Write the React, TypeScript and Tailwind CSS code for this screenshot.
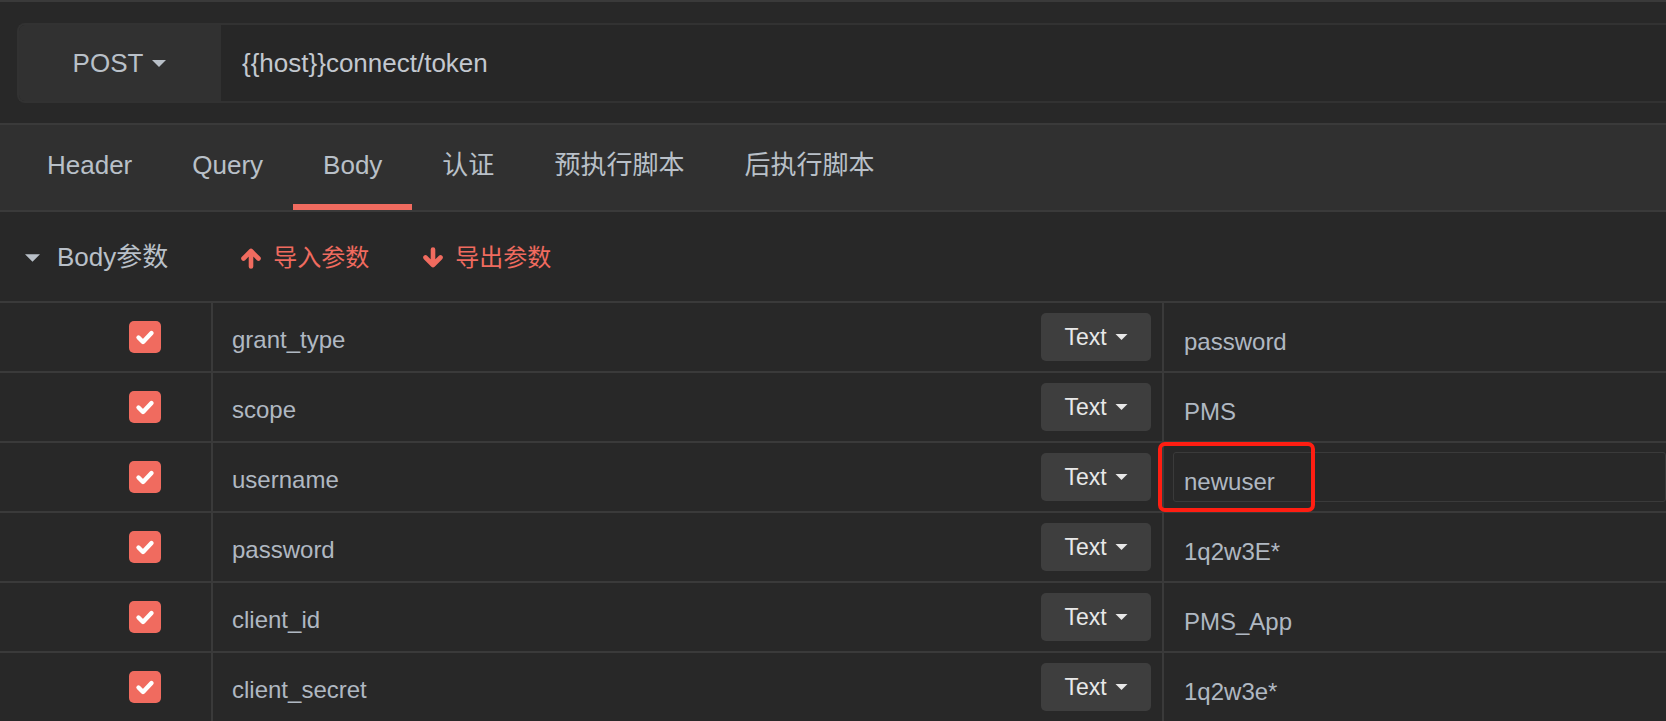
import React from "react";

const rows = [
  { key: "grant_type", value: "password" },
  { key: "scope", value: "PMS" },
  { key: "username", value: "newuser", focused: true },
  { key: "password", value: "1q2w3E*" },
  { key: "client_id", value: "PMS_App" },
  { key: "client_secret", value: "1q2w3e*" },
];

const tabs = ["Header", "Query", "Body", "认证", "预执行脚本", "后执行脚本"];

function Caret({ className }: { className?: string }) {
  return (
    <svg viewBox="0 0 16 8" className={className} fill="currentColor">
      <path d="M0 0h16L8 8z" />
    </svg>
  );
}

function Arrow({ down }: { down?: boolean }) {
  return (
    <svg viewBox="0 0 22 22" className={`h-[22px] w-[22px] ${down ? "rotate-180" : ""}`} fill="none">
      <path d="M11 19.5V4.5M3.5 11.5L11 4l7.5 7.5" stroke="#f06b5f" strokeWidth="4.6" strokeLinecap="round" strokeLinejoin="round" />
    </svg>
  );
}

function Checkbox() {
  return (
    <div className="flex h-[32px] w-[32px] items-center justify-center rounded-[5px] bg-[#f06b5f]">
      <svg viewBox="0 0 32 32" className="h-[32px] w-[32px]" fill="none">
        <path d="M9.5 16.5l4.5 4.5 8.5-9" stroke="#fff" strokeWidth="4.4" strokeLinecap="round" strokeLinejoin="round" />
      </svg>
    </div>
  );
}

export default function App() {
  return (
    <div className="relative h-[721px] w-[1666px] overflow-hidden bg-[#282828] font-['Liberation_Sans','Noto_Sans_CJK_SC',sans-serif] text-[#b9c0c8]">
      <div className="h-[2px] bg-[#3a3a3a]" />

      {/* request line */}
      <div className="pl-[17px] pt-[21px] pb-[20px]">
        <div className="flex h-[80px] overflow-hidden rounded-l-[8px] border-2 border-r-0 border-[#323232]">
          <div className="flex w-[202px] items-center justify-center gap-[8px] bg-[#313131]">
            <span className="text-[26px]">POST</span>
            <Caret className="h-[7px] w-[16px] text-[#b9c0c8]" />
          </div>
          <div className="flex flex-1 items-center bg-[#272727] pl-[21px] text-[26px] text-[#c3c8cf]">
            {"{{host}}connect/token"}
          </div>
        </div>
      </div>

      {/* tabs */}
      <div className="flex h-[89px] border-y-2 border-[#3a3a3a] bg-[#303030] pl-[17px]">
        {tabs.map((t) => (
          <div
            key={t}
            className={`flex items-center border-b-[6px] px-[30px] pt-[2px] text-[26px] ${
              t === "Body" ? "border-[#f06b5f]" : "border-transparent"
            }`}
          >
            {t}
          </div>
        ))}
      </div>

      {/* section header */}
      <div className="flex h-[89px] items-center pt-[2px]">
        <Caret className="ml-[25px] h-[8px] w-[15px] text-[#b9c0c8]" />
        <span className="ml-[17px] text-[26px]">Body参数</span>
        <div className="ml-[72px] flex items-center gap-[11px] text-[24px] text-[#f06b5f]">
          <Arrow />
          <span>导入参数</span>
        </div>
        <div className="ml-[53px] flex items-center gap-[11px] text-[24px] text-[#f06b5f]">
          <Arrow down />
          <span>导出参数</span>
        </div>
      </div>

      {/* params table */}
      <div className="border-t-2 border-[#3a3a3a]">
        {rows.map((r) => (
          <div key={r.key} className="flex h-[70px] border-b-2 border-[#3a3a3a]">
            <div className="flex w-[211px] items-center justify-end pr-[50px]">
              <Checkbox />
            </div>
            <div className="flex w-[951px] items-center border-l-2 border-[#3a3a3a] pl-[19px] pr-[11px]">
              <span className="flex-1 pt-[5px] text-[24px] text-[#b0b8c2]">{r.key}</span>
              <div className="flex h-[48px] w-[110px] items-center justify-center gap-[8px] rounded-[5px] bg-[#3e3e3e] text-[23px] text-[#e8e8e8]">
                <span>Text</span>
                <Caret className="h-[6px] w-[13px] text-[#e8e8e8]" />
              </div>
            </div>
            <div className="flex flex-1 items-center border-l-2 border-[#3a3a3a] pl-[9px]">
              <div
                className={`flex h-[50px] flex-1 items-center rounded-[3px] border pl-[10px] pt-[10px] text-[24px] text-[#b0b8c2] ${
                  r.focused ? "border-[#3a3a3a]" : "border-transparent"
                }`}
              >
                {r.value}
              </div>
            </div>
          </div>
        ))}
      </div>

      {/* annotation */}
      <div className="absolute left-[1158px] top-[442px] h-[70px] w-[157px] rounded-[7px] border-4 border-[#ff1e12]" />
    </div>
  );
}
